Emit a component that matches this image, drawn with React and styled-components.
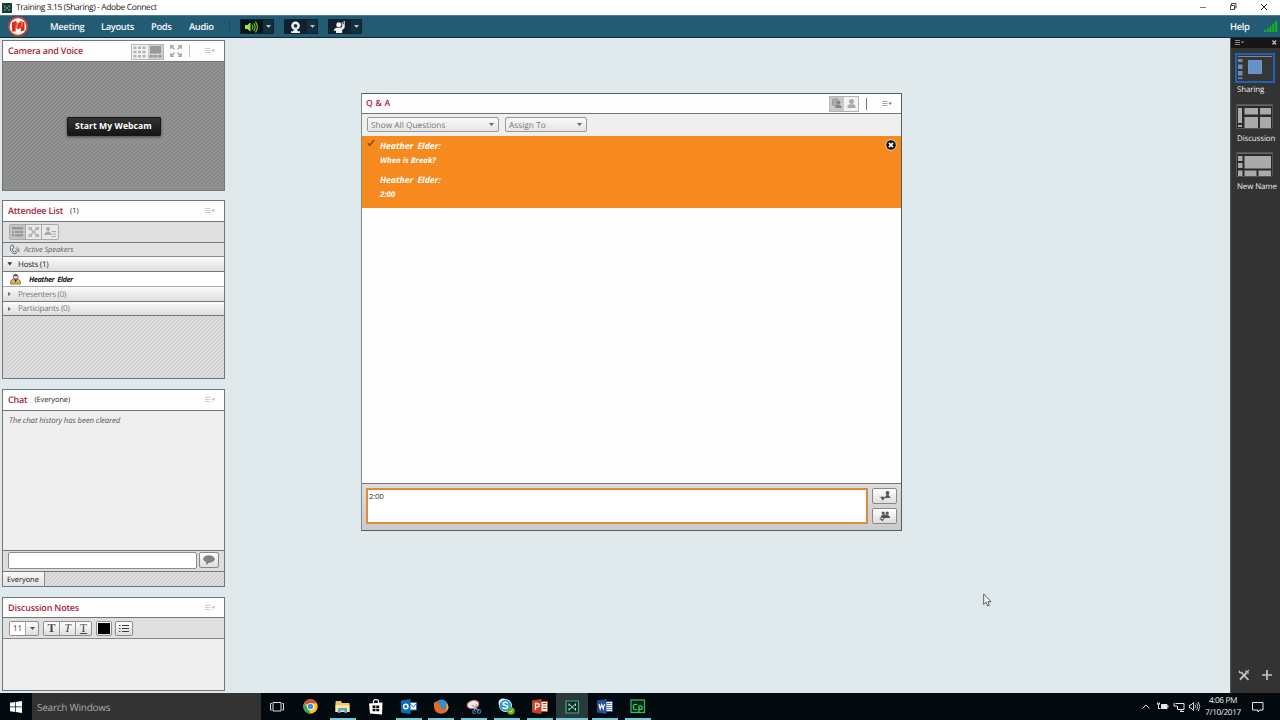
import React, { useState } from 'react';
import styled, { createGlobalStyle, css } from 'styled-components';

const hosts = ['Heather  Elder'];

const questions = [
  { author: 'Heather  Elder:', text: 'When is Break?' },
  { author: 'Heather  Elder:', text: '2:00' },
];

const App = () => {
  const [answer, setAnswer] = useState('2:00');

  return (
    <>
      <GlobalStyle />
      <Screen>
        <TitleBar>
          <AppIcon />
          <WindowTitle>Training 3.15 (Sharing) - Adobe Connect</WindowTitle>
          <WindowControls />
        </TitleBar>

        <MenuBar>
          <Logo />
          <Menu $width={51}>Meeting</Menu>
          <Menu $width={50}>Layouts</Menu>
          <Menu $width={38}>Pods</Menu>
          <Menu $width={40}>Audio</Menu>
          <MenuDivider />
          <DeviceButton $active><SpeakerIcon /><DeviceArrow><Arrow color='#b7c5cc' /></DeviceArrow></DeviceButton>
          <DeviceButton><WebcamIcon /><DeviceArrow><Arrow color='#b7c5cc' /></DeviceArrow></DeviceButton>
          <DeviceButton><RaiseHandIcon /><DeviceArrow><Arrow color='#b7c5cc' /></DeviceArrow></DeviceButton>
          <HelpMenu $width={34}>Help</HelpMenu>
          <SignalIcon />
        </MenuBar>

        <Workspace>
          <Sidebar>
            <Pod $height={151}>
              <PodHeader>
                <PodTitle>Camera and Voice</PodTitle>
                <HeaderTools>
                  <ViewSwitch>
                    <GridIcon />
                    <FilmstripIcon />
                  </ViewSwitch>
                  <ExpandIcon />
                  <HeaderDivider />
                </HeaderTools>
                <PodMenu />
              </PodHeader>
              <CameraBody>
                <WebcamButton>Start My Webcam</WebcamButton>
              </CameraBody>
            </Pod>

            <Pod $height={179} $top={9}>
              <PodHeader>
                <PodTitle>Attendee List</PodTitle>
                <PodNote>(1)</PodNote>
                <PodMenu />
              </PodHeader>
              <AttendeeTools>
                <AttendeeViews />
              </AttendeeTools>
              <SpeakersRow>
                <PhoneIcon />
                <span>Active Speakers</span>
              </SpeakersRow>
              <GroupRow $open $height={15}>
                <Triangle open />
                <span>Hosts (1)</span>
              </GroupRow>
              {hosts.map((name) => (
                <HostRow key={name}>
                  <HostIcon />
                  <span>{name}</span>
                </HostRow>
              ))}
              <GroupRow $height={15}><Triangle /><span>Presenters (0)</span></GroupRow>
              <GroupRow $height={14}><Triangle /><span>Participants (0)</span></GroupRow>
              <Hatch />
            </Pod>

            <Pod $height={198} $top={10}>
              <PodHeader>
                <PodTitle>Chat</PodTitle>
                <PodNote $small>(Everyone)</PodNote>
                <PodMenu />
              </PodHeader>
              <ChatLog>The chat history has been cleared</ChatLog>
              <ChatEntry>
                <ChatInput />
                <ChatButton><BubbleIcon /></ChatButton>
              </ChatEntry>
              <ChatTabs>
                <ChatTab>Everyone</ChatTab>
                <Hatch />
              </ChatTabs>
            </Pod>

            <Pod $height={94} $top={10}>
              <PodHeader $height={20}>
                <PodTitle>Discussion Notes</PodTitle>
                <PodMenu />
              </PodHeader>
              <NotesTools>
                <FontSize>
                  <FontValue>11</FontValue>
                  <FontArrow><Arrow color='#555' /></FontArrow>
                </FontSize>
                <FormatGroup>
                  <FormatButton $bold>T</FormatButton>
                  <FormatButton $italic>T</FormatButton>
                  <FormatButton $underline>T</FormatButton>
                </FormatGroup>
                <ColorButton><Swatch /></ColorButton>
                <ListButton><ListIcon /></ListButton>
              </NotesTools>
            </Pod>
          </Sidebar>

          <QaPod>
            <QaHeader $height={20}>
              <PodTitle>Q &amp; A</PodTitle>
              <HeaderTools>
                <QaSwitch />
                <QaDivider />
              </HeaderTools>
              <PodMenu dark />
            </QaHeader>
            <Filters>
              <Select $width={132}><span>Show All Questions</span><Arrow color='#666' /></Select>
              <Select $width={82}><span>Assign To</span><Arrow color='#666' /></Select>
            </Filters>
            <Question>
              <CheckIcon />
              <Thread>
                {questions.map((q) => (
                  <Message key={q.text}>
                    <Author>{q.author}</Author>
                    <Text>{q.text}</Text>
                  </Message>
                ))}
              </Thread>
              <CloseIcon />
            </Question>
            <QaSpace />
            <QaFooter>
              <Answer value={answer} onChange={(e) => setAnswer(e.target.value)} />
              <SendButtons>
                <SendButton><SendPrivateIcon /></SendButton>
                <SendButton><SendAllIcon /></SendButton>
              </SendButtons>
            </QaFooter>
          </QaPod>

          <Dock>
            <DockHeader><DockHeaderIcons /></DockHeader>
            <DockItem><SharingThumb /><DockLabel>Sharing</DockLabel></DockItem>
            <DockItem><DiscussionThumb /><DockLabel>Discussion</DockLabel></DockItem>
            <DockItem><NewNameThumb /><DockLabel>New Name</DockLabel></DockItem>
            <DockFooter><DockFooterIcons /></DockFooter>
          </Dock>
        </Workspace>

        <Taskbar>
          <Start><WindowsIcon /></Start>
          <Search>Search Windows</Search>
          <Task><TaskViewIcon /></Task>
          <Task><ChromeIcon /></Task>
          <Task $running><FolderIcon /></Task>
          <Task><StoreIcon /></Task>
          <Task $running><OutlookIcon /></Task>
          <Task $running><FirefoxIcon /></Task>
          <Task $running><SnipIcon /></Task>
          <Task $running><SkypeIcon /></Task>
          <Task $running><PowerPointIcon /></Task>
          <Task $running $current><ConnectIcon /></Task>
          <Task $running><WordIcon /></Task>
          <Task $running><CaptivateIcon /></Task>
          <Tray>
            <TrayIcons />
            <Clock>
              <span>4:06 PM</span>
              <span>7/10/2017</span>
            </Clock>
            <NotificationIcon />
          </Tray>
        </Taskbar>
        <Pointer />
      </Screen>
    </>
  );
};

const Arrow = ({ color }) => (
  <svg width='5' height='3' viewBox='0 0 5 3'><path d='M0 0h5L2.5 3z' fill={color} /></svg>
);

const Triangle = ({ open }) => (
  <svg width='6' height='6' viewBox='0 0 6 6'>
    <path d={open ? 'M.5 1.2h4.6L2.8 4.8z' : 'M1 .8v4.4L4 3z'} fill={open ? '#333' : '#777'} />
  </svg>
);

const AppIcon = () => (
  <svg width='10' height='10' viewBox='0 0 10 10'>
    <path d='M0 0h10v10H0z' fill='#173d33' />
    <path d='M2.500 2.500l5 5M7.500 2.500l-5 5M2.500 2.500v2M7.500 2.500v2M2.500 6v2M7.500 6v2' fill='none' stroke='#6fa58e' strokeWidth='.8' />
  </svg>
);

const WindowControls = () => (
  <svg width='72' height='15' viewBox='0 0 72 15' fill='none' stroke='#333'>
    <path d='M0 7.5h6' stroke='#777' />
    <path d='M30.5 5.5h4v4h-4zM31.5 5.5v-2h4.500v4.500h-1.500' strokeWidth='.9' />
    <path d='M61 4l6 6M67 4l-6 6' />
  </svg>
);

const Logo = () => (
  <svg width='22' height='21' viewBox='0 0 22 21'>
    <circle cx='11' cy='10.500' r='10' fill='#d5412f' />
    <circle cx='11' cy='10.500' r='8.300' fill='#fff' />
    <path d='M5 15.500V6.500L8.500 5l2.700 2.500L13.800 5 17.500 6.500v8l-3.700 1v-4L11.200 13.500 8.700 11.500v4z' fill='#d02f1f' />
    <path d='M8.700 11.500L8.500 5l2.700 2.500v6zM13.800 11.500V5l2 .9v4z' fill='#f06b37' />
  </svg>
);

const SpeakerIcon = () => (
  <svg width='22' height='14' viewBox='0 0 22 14'>
    <path d='M4 5h2.500l3-2.800v9.600l-3-2.800H4z' fill='#9be83a' />
    <path d='M11 4.500q1.800 2.500 0 5M12.700 3q2.800 4 0 8M14.400 1.700q4 5.300 0 10.600' fill='none' stroke='#79c52e' strokeWidth='1.100' />
  </svg>
);

const WebcamIcon = () => (
  <svg width='22' height='14' viewBox='0 0 22 14'>
    <circle cx='10.500' cy='5.800' r='4.300' fill='#eef2f3' />
    <circle cx='10.500' cy='5.800' r='1.900' fill='#25323a' />
    <path d='M8.800 10h3.400l.6 1.300H15V13H6v-1.700h2.200z' fill='#eef2f3' />
  </svg>
);

const RaiseHandIcon = () => (
  <svg width='22' height='14' viewBox='0 0 22 14' fill='#eef2f3'>
    <circle cx='9.800' cy='4.800' r='2.500' />
    <path d='M5 9.500l2-1.700h5l1.200-1.200V4.200h2.500v3.200l-2.500 2.900V13H7v-2.500l-2 .6z' />
    <path d='M12.800 2h.9v2.500h-.9zM14.700 1h1v3.500h-1z' />
  </svg>
);

const SignalIcon = () => (
  <svg width='15' height='13' viewBox='0 0 15 13' fill='#13b51b'>
    <path d='M0 10h2v2H0zM2.800 8.500h2V12h-2zM5.500 6.500h2V12h-2zM8.200 3.500h2V12h-2zM11 1h2.200v11H11z' />
  </svg>
);

const GridIcon = () => (
  <svg width='16' height='14' viewBox='0 0 16 14' fill='#b4b4b4'>
    <path d='M1.500 1.500h3V4h-3zM6 1.500h3V4H6zM10.500 1.500h3V4h-3zM1.500 5.700h3v2.500h-3zM6 5.700h3v2.500H6zM10.500 5.700h3v2.500h-3zM1.500 10h3v2.500h-3zM6 10h3v2.500H6zM10.500 10h3v2.500h-3z' />
  </svg>
);

const FilmstripIcon = () => (
  <svg width='15' height='14' viewBox='0 0 15 14'>
    <path d='M0 0h15v14H0z' fill='#d0d0d0' />
    <path d='M2 1h11v7.500H2zM1.500 10h3.300v2.500H1.500zM5.800 10h3.400v2.500H5.800zM10.200 10h3.300v2.500h-3.300z' fill='#999' />
  </svg>
);

const ExpandIcon = () => (
  <svg width='12' height='12' viewBox='0 0 12 12'>
    <path d='M.8 4V.8H4M8 .8h3.200V4M11.200 8v3.200H8M4 11.200H.8V8M1.500 1.500l3 3M10.500 1.500l-3 3M1.500 10.500l3-3M10.500 10.500l-3-3' fill='none' stroke='#a9a9a9' strokeWidth='1.400' />
  </svg>
);

const PodMenu = ({ dark }) => (
  <MenuIcon width='10' height='6' viewBox='0 0 10 6'>
    <path d='M0 .5h5.500M0 2.500h5.500M0 4.500h5.500' stroke={dark ? '#aaa' : '#ccc'} strokeWidth='1' />
    <path d='M6.500 1.600H10L8.200 4z' fill={dark ? '#777' : '#b5b5b5'} />
  </MenuIcon>
);

const AttendeeViews = () => (
  <svg width='50' height='16' viewBox='0 0 50 16'>
    <rect x='.5' y='.5' width='49' height='15' rx='1' fill='#e9e9e9' stroke='#aaa' />
    <path d='M1 1h15.500v14H1z' fill='#c4c4c4' />
    <path d='M16.500 1v14M32.500 1v14' stroke='#aaa' />
    <path d='M3 3h11v2.500H3zM3 7h2v2H3zM6 7h8v2H6zM3 10h2v2.500H3zM6 10h8v2.500H6z' fill='#999' />
    <path d='M19.500 3h3.500v3h-3.500zM26.500 3H30v3h-3.500zM19.500 10h3.500v3h-3.500zM26.500 10H30v3h-3.500z' fill='#b3b3b3' />
    <path d='M22 5.500l5 5M27 5.500l-5 5' stroke='#b3b3b3' strokeWidth='1.300' />
    <circle cx='39' cy='5' r='2' fill='#aaa' />
    <path d='M35.500 11V9.500L38 7.500h2l2.500 2V11z' fill='#aaa' />
    <path d='M42.500 7.500H47M43.500 10H47M42.500 12.500H47' stroke='#aaa' />
  </svg>
);

const PhoneIcon = () => (
  <svg width='11' height='11' viewBox='0 0 11 11' fill='none' stroke='#66717b'>
    <path d='M2.500 1C-.2 4 2 9.500 6.500 10l1-2-1.800-1-1 .7C3.500 7 3 5.500 3.500 4.500L5 4 4.300 1.300z' fill='#dfe4e8' />
    <path d='M6.500 4.500q2 .5 2 3M7.500 3q2.800 1 2.500 5' strokeWidth='.9' />
  </svg>
);

const HostIcon = () => (
  <svg width='11' height='12' viewBox='0 0 11 12'>
    <path d='M.8 11V8L3 6h5L10.300 8v3z' fill='#e3b854' stroke='#6c5730' strokeWidth='.8' />
    <circle cx='5.700' cy='3.700' r='2.500' fill='#d8d3c5' stroke='#555' strokeWidth='.8' />
    <path d='M4.500 6.500h2.400L5.700 10z' fill='#333' />
    <path d='M3.700 3Q5.500 0 7.700 3z' fill='#444' />
  </svg>
);

const BubbleIcon = () => (
  <svg width='12' height='10' viewBox='0 0 12 10'>
    <path d='M6 .8c3 0 5.300 1.300 5.300 3.200S9 7.200 6 7.200L3.500 9.200l.3-2.300C1.800 6.300.7 5.300.7 4 .7 2 3 .8 6 .8z' fill='#858585' stroke='#666' strokeWidth='.7' />
  </svg>
);

const ListIcon = () => (
  <svg width='12' height='9' viewBox='0 0 12 9'>
    <path d='M1 1.500h1.500M1 4.500h1.500M1 7.500h1.500M4 1.500h7M4 4.500h7M4 7.500h7' stroke='#3b3b3b' strokeWidth='1.100' />
  </svg>
);

const QaSwitch = () => (
  <svg width='30' height='16' viewBox='0 0 30 16'>
    <rect x='.5' y='.5' width='29' height='15' fill='#f2f2f2' stroke='#b5b5b5' />
    <path d='M1 1h14v14H1z' fill='#c9c9c9' />
    <path d='M3.500 4q0-1 1-1h4v6l-1 1H5L3.500 8.500z' fill='#aaa' stroke='#8a8a8a' strokeWidth='.7' />
    <circle cx='9.500' cy='6.500' r='2' fill='#858585' />
    <path d='M6.500 12v-1.700l2-1.500h2l2 1.500V12z' fill='#858585' />
    <circle cx='22.500' cy='5.500' r='2.500' fill='#aaa' />
    <path d='M18.500 12v-2.200l2-1.500h4l2 1.500V12z' fill='#aaa' />
  </svg>
);

const CheckIcon = () => (
  <svg width='8' height='8' viewBox='0 0 8 8'>
    <path d='M.8 4.300l1.900 2L7.200 1' fill='none' stroke='#8e4b0b' strokeWidth='1.500' />
  </svg>
);

const CloseIcon = () => (
  <svg width='12' height='12' viewBox='0 0 12 12'>
    <circle cx='6' cy='6' r='5.300' fill='#111' stroke='#f6dfc8' strokeWidth='.9' />
    <path d='M3.900 3.900l4.200 4.200M8.100 3.900L3.900 8.100' stroke='#fff' strokeWidth='1.700' />
  </svg>
);

const SendPrivateIcon = () => (
  <svg width='12' height='10' viewBox='0 0 12 10' fill='#555'>
    <circle cx='8.500' cy='2' r='1.900' />
    <path d='M5.500 6.500l2-2.500h2l2 2.500v.5h-6zM0 4.500l2 1.700L4.500 5v1.500h2L3.800 9.500z' />
  </svg>
);

const SendAllIcon = () => (
  <svg width='12' height='11' viewBox='0 0 12 11' fill='#555'>
    <circle cx='4.200' cy='2' r='1.600' />
    <circle cx='8.200' cy='2' r='1.600' />
    <path d='M1.500 6l2-2.500h5.500L11.500 7H6L3.500 10.300 0 7.500h2z' />
    <path d='M2.500 7h2v1.200h-2z' fill='#eee' />
  </svg>
);

const DockHeaderIcons = () => (
  <svg width='46' height='8' viewBox='0 0 46 8'>
    <path d='M1 2.500h5M1 4.500h5M1 6.500h5' stroke='#888' />
    <path d='M7 3.500h3L8.500 5.500z' fill='#999' />
    <path d='M38.500 2.500l3.500 4M42 2.500l-3.500 4' stroke='#bbb' strokeWidth='1.300' />
  </svg>
);

const SharingThumb = () => (
  <svg width='40' height='30' viewBox='0 0 40 30'>
    <rect x='1' y='1' width='38' height='28' fill='#363636' stroke='#1f60bb' strokeWidth='2' />
    <path d='M3 3.500h34' stroke='#8a8a8a' />
    <path d='M3 6h4.500v3H3zM3 11.500h4.500V16H3zM3 18h4.500v4.500H3zM3 24.500h4.500V26H3z' fill='#7090b0' />
    <path d='M13.500 7.500h13v13h-13z' fill='#6591c9' stroke='#84aee0' strokeWidth='.7' />
  </svg>
);

const DiscussionThumb = () => (
  <svg width='40' height='30' viewBox='0 0 40 30'>
    <path d='M1.500 2.500h36v24h-36z' fill='#2b2b2b' stroke='#555' />
    <path d='M2 3.500h35' stroke='#666' />
    <path d='M3 6h4v15H3zM3 23h4v2H3zM9.500 6H23v6.500H9.500zM25 6h11v6.500H25zM9.500 15H23v11H9.500zM25 15h11v11H25z' fill='#aaa' />
  </svg>
);

const NewNameThumb = () => (
  <svg width='40' height='30' viewBox='0 0 40 30'>
    <path d='M1.500 2.500h36v24h-36z' fill='#2b2b2b' stroke='#555' />
    <path d='M2 3.500h35' stroke='#666' />
    <path d='M3 6h4.500v5H3zM3 13h4.500v5H3zM3 20.500h4.500V26H3zM9.500 6H36v12.500H9.500zM9.500 20.500h12V26h-12zM23.500 20.500H36V26H23.500z' fill='#aaa' />
  </svg>
);

const DockFooterIcons = () => (
  <svg width='36' height='12' viewBox='0 0 36 12' fill='none' stroke='#c4c4c4'>
    <path d='M3 3l7.500 8M8.500 4L2 10.500' strokeWidth='1.800' />
    <path d='M1.500 1.500v2L3.500 4M8 1.500v2.500h3M11 1L9 3' strokeWidth='1.200' />
    <path d='M24 6h10M29 1v10' strokeWidth='1.700' />
  </svg>
);

const WindowsIcon = () => (
  <svg width='12' height='12' viewBox='0 0 12 12' fill='#fff'>
    <path d='M0 1.800L5.200 1v4.600H0zM5.900.9L12 0v5.600H5.900zM0 6.300h5.200V11L0 10.200zM5.900 6.300H12V12l-6.100-.9z' />
  </svg>
);

const TaskViewIcon = () => (
  <svg width='14' height='12' viewBox='0 0 14 12' fill='none' stroke='#ddd'>
    <path d='M3 1.500h8v8.500H3zM1.800 2.500H.5V9h1.300M12.200 2.500h1.300V9h-1.300' />
  </svg>
);

const ChromeIcon = () => (
  <svg width='15' height='15' viewBox='0 0 15 15'>
    <circle cx='7.500' cy='7.500' r='7.200' fill='#f6c91b' />
    <path d='M7.500 7.500L1.200 4A7.200 7.200 0 0 1 14 4.200H7.500z' fill='#df4937' />
    <path d='M1.200 4L5 9.500 7.500 14.700A7.200 7.200 0 0 1 1.200 4z' fill='#36a452' />
    <circle cx='7.500' cy='7.500' r='3.500' fill='#fff' />
    <circle cx='7.500' cy='7.500' r='2.700' fill='#438bea' />
  </svg>
);

const FolderIcon = () => (
  <svg width='15' height='14' viewBox='0 0 15 14'>
    <path d='M.5 2V12H14.500V3H7L6 1H1z' fill='#e9c766' />
    <path d='M.5 5h14v7H.5z' fill='#ffe69a' />
    <path d='M3 13V9q0-1 1-1h7q1 0 1 1v4H9.500v-2.500h-4V13z' fill='#55a9d2' />
  </svg>
);

const StoreIcon = () => (
  <svg width='14' height='16' viewBox='0 0 14 16'>
    <path d='M4.500 4V2.200q0-1.500 2.500-1.500t2.500 1.500V4' fill='none' stroke='#fff' strokeWidth='1.200' />
    <path d='M0 4.500L13.500 3.500 13 15.500 1 14.500z' fill='#fff' />
    <path d='M3.500 6.500h3V9h-3zM7.200 6.500h3V9h-3zM3.500 9.800h3v2.500h-3zM7.200 9.800h3v2.500h-3z' fill='#080b0d' />
  </svg>
);

const OutlookIcon = () => (
  <svg width='16' height='15' viewBox='0 0 16 15'>
    <path d='M8 3.500h7.500v7.500H8z' fill='#fff' stroke='#1f72bd' />
    <path d='M9 5l3.500 3 2.500-3' fill='none' stroke='#1f72bd' />
    <path d='M0 1.500L9.500 0v15L0 13.500z' fill='#0b6bb7' />
    <circle cx='4.800' cy='7.500' r='2.200' fill='none' stroke='#fff' strokeWidth='1.400' />
  </svg>
);

const FirefoxIcon = () => (
  <svg width='16' height='15' viewBox='0 0 16 15'>
    <circle cx='8.500' cy='7' r='6.500' fill='#3b8cce' />
    <path d='M1 3.500l2-1 2 .5q-1 2 1.500 3l2 .8-1 1.700q1 2.500 4 1.500 3-1.500 1.700-6Q15.500 6 15.500 8.500 14 14.700 8 14.700T1 8z' fill='#e66a22' />
    <path d='M13.500 4q2 2 2 4.500-1 3.500-3 4.500 2-4 1-9z' fill='#f5b33c' />
  </svg>
);

const SnipIcon = () => (
  <svg width='16' height='16' viewBox='0 0 16 16'>
    <ellipse cx='7' cy='5.500' rx='6' ry='4' fill='#f3e8e8' stroke='#c66a75' strokeWidth='1' transform='rotate(-15 7 5.500)' />
    <path d='M6 6l7 6M10.500 5L8 12' stroke='#a5adb5' strokeWidth='1.300' />
    <circle cx='13' cy='12.500' r='1.800' fill='none' stroke='#456e98' strokeWidth='1.200' />
    <circle cx='8' cy='13' r='1.500' fill='none' stroke='#456e98' strokeWidth='1.200' />
  </svg>
);

const SkypeIcon = () => (
  <svg width='17' height='17' viewBox='0 0 17 17'>
    <circle cx='5' cy='5' r='4.500' fill='#e7f5fb' />
    <circle cx='7.500' cy='7.500' r='6.500' fill='#e7f5fb' />
    <circle cx='7.300' cy='7.500' r='5.700' fill='#249fd8' />
    <path d='M10 5.200Q7.500 3.500 5.500 5q-1 1.500 1.500 2.200 3.500.6 2.500 2.500-1.700 1.800-5 0' fill='none' stroke='#fff' strokeWidth='1.500' />
    <circle cx='13' cy='13' r='3.800' fill='#69a81e' />
    <path d='M11.300 13l1.300 1.300 2-2.500' fill='none' stroke='#e8f5d8' />
  </svg>
);

const PowerPointIcon = () => (
  <svg width='16' height='15' viewBox='0 0 16 15'>
    <path d='M8 2.500h7.500v10H8z' fill='#fff' stroke='#cf4429' />
    <path d='M10.500 4.500h4M10.500 7h4M10.500 9.500h4' stroke='#cf4429' />
    <path d='M0 1.500L9.500 0v15L0 13.500z' fill='#cb3f24' />
    <path d='M3.500 11V4.500h2q1.700 0 1.700 1.800T5.500 8.100h-2' fill='none' stroke='#fff' strokeWidth='1.300' />
  </svg>
);

const ConnectIcon = () => (
  <svg width='15' height='14' viewBox='0 0 15 14'>
    <path d='M1 1h12.500v12H1z' fill='#0e3028' stroke='#4da77d' strokeWidth='1.200' />
    <path d='M4 4l6.500 6M10.500 4L4 10M4 3.500V6M10.500 3.500V6M4 8v2.500M10.500 8v2.500' stroke='#b6d5c6' />
  </svg>
);

const WordIcon = () => (
  <svg width='16' height='15' viewBox='0 0 16 15'>
    <path d='M8 2.500h7.500v10H8z' fill='#fff' stroke='#2b579a' />
    <path d='M10 4.500h4.500M10 6.500h4.500M10 8.500h4.500M10 10.500h4.500' stroke='#5b7fb6' />
    <path d='M0 1.500L9.500 0v15L0 13.500z' fill='#254f92' />
    <path d='M2 5l1.200 5 1.500-4.500L6.300 10l1.200-5' fill='none' stroke='#fff' strokeWidth='1.100' />
  </svg>
);

const CaptivateIcon = () => (
  <svg width='16' height='15' viewBox='0 0 16 15'>
    <rect x='1' y='1' width='13.500' height='12.500' fill='#062816' stroke='#2fbd62' strokeWidth='1.200' />
    <text x='7.700' y='10.500' textAnchor='middle' fontFamily='Open Sans' fontSize='8.500' fontWeight='600' fill='#54dc83'>Cp</text>
  </svg>
);

const TrayIcons = () => (
  <svg width='60' height='13' viewBox='0 0 60 13' fill='none' stroke='#e7e7e7'>
    <path d='M1.500 8.500L5 5l3.500 3.500' />
    <path d='M20.500 4.500H26v4h-5.500z' fill='#e7e7e7' />
    <path d='M27 5.500v2M16 4h3M16.500 4V2.500M18.500 4V2.500M17.500 4v4.500h2' />
    <path d='M34.500 3.500H43v6h-6M36.500 9.500V6M33 3v3h3M39 11.500h4M40 9.500v2' />
    <path d='M48.500 5h1.500l2.500-2.500v8L50 8h-1.500z' strokeWidth='.9' />
    <path d='M54 4.800q1.200 1.700 0 3.500M55.700 3.300q2.200 3.200 0 6.500M57.300 2q3 4.500 0 9' strokeWidth='.8' />
  </svg>
);

const NotificationIcon = () => (
  <svg width='12' height='12' viewBox='0 0 12 12'>
    <path d='M.5 1.500h10.500v7.500H8L6 11V9H.5z' fill='none' stroke='#e7e7e7' />
  </svg>
);

const Pointer = () => (
  <Cursor width='9' height='14' viewBox='0 0 9 14'>
    <path d='M.7 1v10.500l2.400-2.300 1.700 3.700 1.600-.7-1.600-3.500h3.200z' fill='#fff' stroke='#333' strokeWidth='.8' />
  </Cursor>
);

const GlobalStyle = createGlobalStyle`
  * {
    box-sizing: border-box;
  }

  body {
    margin: 0;
    overflow: hidden;
    font-family: 'Open Sans', sans-serif;
    text-rendering: geometricPrecision;
  }

  svg {
    display: block;
    flex: none;
  }

  button {
    padding: 0;
    font-family: inherit;
  }
`;

const Screen = styled.div`
  position: relative;
  display: flex;
  flex-direction: column;
  width: 1280px;
  height: 720px;
  overflow: hidden;
  background: #e0e9ec;
  white-space: pre;
`;

const TitleBar = styled.header`
  display: flex;
  align-items: center;
  gap: 4px;
  height: 15px;
  padding: 0 8px 0 2px;
  background: #fff;
`;

const WindowTitle = styled.span`
  flex: 1;
  font-size: 8.5px;
  letter-spacing: -0.4px;
  line-height: 16px;
  color: #222;
`;

const MenuBar = styled.nav`
  display: flex;
  align-items: center;
  height: 23px;
  padding: 0 1px 0 7px;
  background: #245b74;
  border-top: 1px solid #517b90;
  border-bottom: 1px solid #102936;
`;

const Menu = styled.span`
  width: ${({ $width }) => $width}px;
  padding-bottom: 1px;
  font-size: 9.4px;
  font-weight: 600;
  letter-spacing: -0.35px;
  color: #f4f7f8;

  svg + & {
    margin-left: 21px;
  }
`;

const MenuDivider = styled.i`
  width: 1px;
  height: 11px;
  background: #1b485d;
`;

const DeviceButton = styled.div`
  display: flex;
  align-items: center;
  width: 34px;
  height: 15px;
  margin-left: 10px;
  border: 1px solid #0c2330;
  border-radius: 1px;
  background: ${({ $active }) => ($active ? '#06131a' : '#10212b')};
`;

const DeviceArrow = styled.span`
  display: flex;
  flex: 1;
  align-items: center;
  align-self: stretch;
  justify-content: center;
  background: #12303e;
`;

const HelpMenu = styled(Menu)`
  margin-left: auto;
`;

const Workspace = styled.main`
  display: flex;
  flex: none;
  height: 655px;
`;

const Sidebar = styled.aside`
  width: 225px;
  padding: 2px 0 0 2px;
`;

const Pod = styled.section`
  display: flex;
  flex-direction: column;
  height: ${({ $height }) => $height}px;
  margin-top: ${({ $top }) => $top || 0}px;
  border: 1px solid #72777a;
  background: #efefef;
`;

const PodHeader = styled.div`
  display: flex;
  flex: none;
  align-items: center;
  height: ${({ $height }) => $height || 21}px;
  padding: 0 9px 0 5px;
  border-bottom: 1px solid #747474;
  background: #fefefe;
`;

const PodTitle = styled.h2`
  margin: 0;
  padding-bottom: 1px;
  font-size: 9px;
  font-weight: 600;
  letter-spacing: -0.2px;
  color: #a82540;
`;

const PodNote = styled.span`
  margin-left: 7px;
  padding-bottom: 1px;
  font-size: ${({ $small }) => ($small ? 7.3 : 7.5)}px;
  color: #222;
`;

const MenuIcon = styled.svg`
  margin-left: auto;
`;

const HeaderTools = styled.div`
  display: flex;
  align-items: center;
  gap: 7px;
  margin-left: auto;

  & + ${MenuIcon} {
    margin-left: 15px;
  }
`;

const ViewSwitch = styled.div`
  display: flex;
  margin: 1px -1px 0 0;
  border: 1px solid #b8b8b8;
  background: #f1f1f1;
`;

const HeaderDivider = styled.i`
  width: 1px;
  height: 12px;
  background: #c5c5c5;
`;

const stripes = (base, line) => css`
  background: repeating-linear-gradient(135deg, ${base} 0, ${line} 1.414px, ${base} 2.828px);
`;

const CameraBody = styled.div`
  display: flex;
  flex: 1;
  align-items: center;
  justify-content: center;
  ${stripes('#858585', '#979797')}
`;

const WebcamButton = styled.button`
  width: 94px;
  height: 19px;
  border: 1px solid #181818;
  border-radius: 1px;
  background: linear-gradient(#333, #151515);
  box-shadow: 0 1px 3px #444;
  font-size: 8.6px;
  font-weight: 700;
  letter-spacing: 0.08px;
  line-height: 16px;
  color: #fff;
`;

const AttendeeTools = styled.div`
  height: 21px;
  padding: 2px 0 0 6px;
  border-bottom: 1px solid #777;
  background: #e0e0e0;
`;

const SpeakersRow = styled.div`
  display: flex;
  align-items: center;
  gap: 4px;
  height: 14px;
  padding-left: 6px;
  border-bottom: 1px solid #888;
  background: #e1e1e1;
  font-size: 7.4px;
  font-style: italic;
  letter-spacing: -0.05px;
  color: #666;

  span {
    padding-top: 1px;
  }
`;

const GroupRow = styled.div`
  display: flex;
  align-items: center;
  gap: 5px;
  height: ${({ $height }) => $height}px;
  padding-left: 4px;
  border-bottom: 1px solid #777;
  background: linear-gradient(#fbfbfb, #dedede);
  font-size: 8px;
  letter-spacing: -0.25px;
  color: ${({ $open }) => ($open ? '#222' : '#777')};
`;

const HostRow = styled.div`
  display: flex;
  align-items: center;
  gap: 8px;
  height: 15px;
  padding-left: 7px;
  border-bottom: 1px solid #aaa;
  background: #fff;
  font-size: 7.4px;
  font-style: italic;
  font-weight: 700;
  letter-spacing: -0.45px;
  color: #222;

  span {
    padding-top: 2px;
  }
`;

const Hatch = styled.div`
  flex: 1;
  ${stripes('#cdcdcd', '#e3e3e3')}
`;

const ChatLog = styled.div`
  flex: 1;
  padding: 5px 6px;
  font-size: 7.8px;
  font-style: italic;
  letter-spacing: -0.12px;
  color: #555;
`;

const ChatEntry = styled.div`
  display: flex;
  gap: 2px;
  height: 22px;
  padding: 1px 5px;
  border-top: 1px solid #777;
  border-bottom: 1px solid #777;
  background: #dedede;
`;

const ChatInput = styled.input`
  width: 189px;
  height: 17px;
  padding: 0 4px;
  border: 1px solid #8d8d8d;
  border-radius: 2px;
  background: #fff;
`;

const ChatButton = styled.button`
  display: flex;
  align-items: center;
  justify-content: center;
  width: 20px;
  height: 16px;
  border: 1px solid #888;
  border-radius: 2px;
  background: linear-gradient(#fff, #ddd);
`;

const ChatTabs = styled.div`
  display: flex;
  height: 14px;
`;

const ChatTab = styled.span`
  width: 42px;
  padding-left: 4px;
  border-right: 1px solid #888;
  background: linear-gradient(#f7f7f7, #e3e3e3);
  font-size: 7.4px;
  line-height: 16px;
  color: #111;
`;

const NotesTools = styled.div`
  display: flex;
  align-items: flex-start;
  height: 21px;
  padding: 3px 6px;
  border-bottom: 1px solid #888;
  background: #dfdfdf;
`;

const buttonFrame = css`
  height: 15px;
  border: 1px solid #8e8e8e;
  border-radius: 2px;
  background: linear-gradient(#fff, #dedede);
`;

const FontSize = styled.div`
  ${buttonFrame}
  display: flex;
  width: 30px;
`;

const FontValue = styled.span`
  width: 16px;
  border-right: 1px solid #aaa;
  background: #fff;
  font-size: 8px;
  line-height: 13px;
  text-align: center;
  color: #444;
`;

const FontArrow = styled.span`
  display: flex;
  flex: 1;
  align-items: center;
  justify-content: center;
`;

const FormatGroup = styled.div`
  ${buttonFrame}
  display: flex;
  width: 49px;
  margin-left: 4px;
`;

const FormatButton = styled.span`
  flex: 1;
  font-family: 'Liberation Serif', serif;
  font-size: 12px;
  font-weight: ${({ $bold }) => ($bold ? 700 : 400)};
  font-style: ${({ $italic }) => ($italic ? 'italic' : 'normal')};
  text-decoration: ${({ $underline }) => ($underline ? 'underline' : 'none')};
  line-height: 13px;
  text-align: center;
  color: #444;

  & + & {
    border-left: 1px solid #999;
  }
`;

const ColorButton = styled.div`
  ${buttonFrame}
  width: 16px;
  margin-left: 4px;
  padding: 1px;
`;

const Swatch = styled.i`
  display: block;
  width: 12px;
  height: 11px;
  background: #000;
`;

const ListButton = styled.div`
  ${buttonFrame}
  display: flex;
  align-items: center;
  justify-content: center;
  width: 18px;
  margin-left: 3px;
`;

const QaPod = styled.section`
  display: flex;
  flex-direction: column;
  width: 541px;
  height: 438px;
  margin: 55px 0 0 136px;
  border: 1px solid #565d60;
  border-left-color: #7e898e;
  background: #fefefe;
`;

const QaHeader = styled(PodHeader)`
  padding-right: 9px;
  padding-left: 4px;

  ${PodTitle} {
    font-size: 8.6px;
    letter-spacing: 0.2px;
  }
`;

const QaDivider = styled(HeaderDivider)`
  background: #777;
`;

const Filters = styled.div`
  display: flex;
  gap: 6px;
  height: 22px;
  padding: 3px 5px;
  background: #efefef;
`;

const Select = styled.div`
  display: flex;
  align-items: center;
  justify-content: space-between;
  width: ${({ $width }) => $width}px;
  height: 15px;
  padding: 0 4px 0 3px;
  border: 1px solid #999;
  border-radius: 2px;
  background: linear-gradient(#f9f9f9, #e5e5e5);
  font-size: 8.3px;
  letter-spacing: 0.02px;
  color: #777;

  span {
    padding-top: 1px;
  }
`;

const Question = styled.div`
  display: flex;
  height: 72px;
  padding: 3px 4px 0 5px;
  background: #f68a1f;
`;

const Thread = styled.div`
  flex: 1;
  margin-left: 5px;
  padding-top: 1px;
  color: #fff;
`;

const Message = styled.div`
  height: 34px;
  font-style: italic;
  font-weight: 700;
`;

const Author = styled.div`
  height: 15px;
  font-size: 8.7px;
  letter-spacing: -0.05px;
  line-height: 12px;
`;

const Text = styled.div`
  font-size: 7.8px;
  line-height: 12px;
`;

const QaSpace = styled.div`
  flex: 1;
`;

const QaFooter = styled.div`
  display: flex;
  gap: 4px;
  height: 47px;
  padding: 4px 4px 0;
  border-top: 1px solid #777;
  background: linear-gradient(#dedede, #cbcbcb);
`;

const Answer = styled.textarea`
  width: 502px;
  height: 36px;
  padding: 0 1px;
  resize: none;
  border: 2px solid #db8c42;
  outline: 0;
  background: #fff;
  font-family: 'Open Sans', sans-serif;
  font-size: 8px;
  letter-spacing: -0.3px;
  color: #333;
`;

const SendButtons = styled.div`
  display: flex;
  flex-direction: column;
  gap: 4px;
`;

const SendButton = styled(ChatButton)`
  width: 25px;
`;

const Dock = styled.aside`
  display: flex;
  flex-direction: column;
  width: 50px;
  margin-left: auto;
  border-left: 1px solid #555;
  background: #333334;
`;

const DockHeader = styled.div`
  height: 10px;
  margin-bottom: 5px;
  padding-left: 3px;
  background: #161616;
`;

const DockItem = styled.div`
  height: 48.5px;
  padding-left: 4px;
`;

const DockLabel = styled.span`
  display: block;
  margin-left: 2px;
  font-size: 7.9px;
  letter-spacing: -0.1px;
  line-height: 14px;
  color: #eee;
`;

const DockFooter = styled.div`
  margin-top: auto;
  padding: 0 0 12px 7px;
`;

const Taskbar = styled.footer`
  display: flex;
  flex: none;
  height: 27px;
  background: #020a0f;
`;

const Start = styled.div`
  display: flex;
  align-items: center;
  justify-content: center;
  width: 32px;
`;

const Search = styled.div`
  width: 229px;
  padding-left: 5px;
  background: #333;
  font-size: 10px;
  letter-spacing: -0.25px;
  line-height: 28px;
  color: #aaa;
`;

const Task = styled.div`
  display: flex;
  align-items: center;
  justify-content: center;
  width: 26px;
  margin: 0 3.4px;
  border-top: 2px solid transparent;
  border-bottom: 2px solid ${({ $running }) => ($running ? '#76c9d5' : 'transparent')};
  ${({ $current }) => $current && css`
    width: 32px;
    margin: 0 0.4px;
    border-top-color: #29393c;
    background: #29393c;
  `}
`;

const Tray = styled.div`
  display: flex;
  align-items: center;
  margin-left: auto;
  padding-right: 16px;
`;

const Clock = styled.div`
  display: flex;
  flex-direction: column;
  align-items: center;
  width: 38px;
  margin: 0 10px 0 3px;
  font-size: 8.2px;
  line-height: 12px;
  letter-spacing: -0.35px;
  color: #f2f2f2;
`;

const Cursor = styled.svg`
  position: absolute;
  top: 593px;
  left: 983px;
`;

export default App;
